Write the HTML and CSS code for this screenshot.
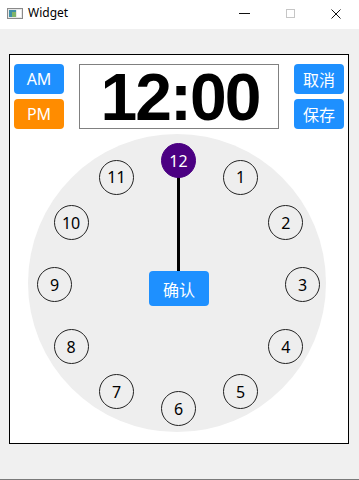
FILE: index.html
```html
<!DOCTYPE html>
<html lang="zh">
<head>
  <meta charset="UTF-8" />
  <title>Widget</title>
  <link rel="stylesheet" href="styles.css">
</head>
<body>
  <div class="window">
    <div class="titlebar">
      <svg class="app-icon" width="16" height="11" viewBox="0 0 16 11">
        <rect x="0.5" y="0.5" width="15" height="10" fill="#e8e8e8" stroke="#8a8a8a"/>
        <rect x="2" y="2" width="7" height="7" fill="#3f8fa8"/>
        <rect x="5" y="4" width="4" height="5" fill="#7fb56a"/>
        <rect x="10" y="2" width="4" height="7" fill="#ffffff"/>
      </svg>
      <span class="title">Widget</span>
      <div class="controls">
        <div class="ctl"><span class="ctl-min"></span></div>
        <div class="ctl"><span class="ctl-max"></span></div>
        <div class="ctl">
          <svg width="10" height="10" viewBox="0 0 10 10">
            <path d="M0.5 0.5 L9.5 9.5 M9.5 0.5 L0.5 9.5" stroke="#111" stroke-width="1"/>
          </svg>
        </div>
      </div>
    </div>

    <div class="client">
      <div class="frame">
        <div class="header">
          <div class="btn-col">
            <div class="btn blue">AM</div>
            <div class="btn orange">PM</div>
          </div>
          <div class="display">12:00</div>
          <div class="btn-col">
            <div class="btn blue">取消</div>
            <div class="btn blue">保存</div>
          </div>
        </div>

        <div class="dial">
          <div class="hand"></div>
          <div class="num n12 selected">12</div>
          <div class="num n1">1</div>
          <div class="num n2">2</div>
          <div class="num n3">3</div>
          <div class="num n4">4</div>
          <div class="num n5">5</div>
          <div class="num n6">6</div>
          <div class="num n7">7</div>
          <div class="num n8">8</div>
          <div class="num n9">9</div>
          <div class="num n10">10</div>
          <div class="num n11">11</div>
          <div class="btn blue confirm">确认</div>
        </div>
      </div>
    </div>
  </div>
</body>
</html>
```

FILE: styles.css
```css
* {
  box-sizing: border-box;
}

body {
  margin: 0;
  padding: 0;
  font-family: "Noto Sans", "Noto Sans CJK SC", sans-serif;
  background-color: #f0f0f0;
}

.window {
  width: 359px;
  height: 480px;
  background-color: #f0f0f0;
  border-bottom: 1px solid #7a7a7a;
  overflow: hidden;
}

.titlebar {
  height: 29px;
  background-color: #fff;
  display: flex;
  align-items: flex-start;
}

.app-icon {
  margin: 8px 0 0 7px;
}

.title {
  font-size: 12px;
  color: #000;
  margin: 5px 0 0 5px;
  line-height: 16px;
}

.controls {
  margin-left: auto;
  display: flex;
  height: 29px;
}

.ctl {
  width: 46px;
  height: 29px;
  display: flex;
  align-items: center;
  justify-content: center;
  padding-bottom: 2px;
}

.ctl-min {
  width: 11px;
  height: 1px;
  background-color: #111;
}

.ctl-max {
  width: 9px;
  height: 9px;
  border: 1px solid #c6c6c6;
}

.client {
  padding: 25px 0 0 9px;
}

.frame {
  width: 340px;
  height: 390px;
  border: 1px solid #000;
  background-color: #fff;
  padding: 9px 4px 0 4px;
}

.header {
  display: flex;
  gap: 15px;
  height: 65px;
}

.btn-col {
  display: flex;
  flex-direction: column;
  gap: 5px;
}

.btn {
  width: 50px;
  height: 30px;
  border-radius: 4px;
  color: #fff;
  font-size: 16px;
  display: flex;
  align-items: center;
  justify-content: center;
}

.blue {
  background-color: #1e90ff;
}

.orange {
  background-color: #ff8c00;
}

.display {
  width: 200px;
  height: 65px;
  border: 1px solid #808080;
  display: flex;
  align-items: center;
  justify-content: center;
  font-family: "Liberation Sans", sans-serif;
  font-weight: bold;
  font-size: 66px;
  letter-spacing: -2px;
  color: #000;
  padding-left: 2px;
}

.dial {
  position: relative;
  width: 298px;
  height: 298px;
  margin: 5px 0 0 14px;
  border-radius: 50%;
  background-color: #eeeeee;
}

.hand {
  position: absolute;
  left: 149px;
  top: 26px;
  width: 3px;
  height: 125px;
  background-color: #000;
}

.num {
  position: absolute;
  width: 35px;
  height: 35px;
  border-radius: 50%;
  border: 1px solid #222;
  display: flex;
  align-items: center;
  justify-content: center;
  font-size: 16px;
  color: #000;
}

.num.selected {
  background-color: #4b0082;
  border-color: #4b0082;
  color: #fff;
}

.n12 { left: 133px; top: 9px; }
.n1  { left: 195px; top: 25.6px; }
.n2  { left: 240.4px; top: 71px; }
.n3  { left: 257px; top: 133px; }
.n4  { left: 240.4px; top: 195px; }
.n5  { left: 195px; top: 240.4px; }
.n6  { left: 133px; top: 257px; }
.n7  { left: 71px; top: 240.4px; }
.n8  { left: 25.6px; top: 195px; }
.n9  { left: 9px; top: 133px; }
.n10 { left: 25.6px; top: 71px; }
.n11 { left: 71px; top: 25.6px; }

.confirm {
  position: absolute;
  left: 121px;
  top: 137px;
  width: 60px;
  height: 35px;
}
```
